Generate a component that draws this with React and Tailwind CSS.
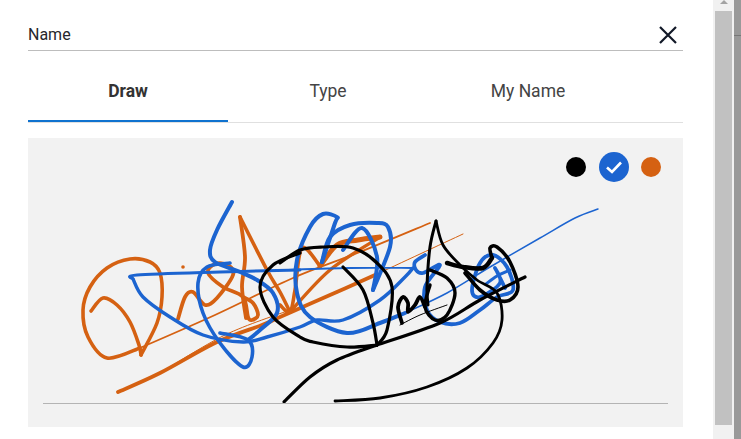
const BLUE = '#1c64d0';
const ORANGE = '#d56112';
const BLACK = '#000000';

// pen strokes in page coordinates: [colour, width, points]
const strokes = [
  // orange signature
  [ORANGE, 3.6, [[91, 311], [103, 298], [117, 305], [130, 322], [139, 345], [141, 355]]],
  [ORANGE, 3.6, [[141, 355], [157, 323], [162, 297], [160, 273], [150, 262], [130, 259], [107, 268], [90, 287], [83, 310], [88, 337], [107, 358], [140, 348]]],
  [ORANGE, 1.8, [[140, 348], [215, 315], [293, 278], [360, 252], [430, 223]]],
  [ORANGE, 3.8, [[178, 319], [185, 297], [193, 292], [205, 305], [217, 298], [233, 275], [228, 265], [215, 264], [208, 273], [223, 287], [243, 297], [248, 317], [252, 320], [258, 315], [253, 303], [243, 297]]],
  [ORANGE, 3.8, [[240, 217], [245, 257], [242, 287], [246, 318]]],
  [ORANGE, 3.6, [[240, 217], [267, 270], [280, 292], [290, 312]]],
  [ORANGE, 3.8, [[118, 392], [160, 373], [217, 342], [262, 325], [280, 317], [330, 295], [375, 275]]],
  [ORANGE, 1, [[375, 275], [420, 254], [463, 234]]],
  [ORANGE, 1, [[160, 373], [225, 335], [290, 310]]],
  [ORANGE, 3.4, [[290, 312], [330, 270], [380, 237]]],
  [ORANGE, 5, [[380, 237], [358, 240], [337, 245], [320, 266]]],
  [ORANGE, 3.6, [[320, 266], [302, 248], [295, 290], [290, 312], [280, 305]]],
  // blue signature
  [BLUE, 4, [[232, 202], [217, 230], [210, 250], [215, 262], [240, 272], [257, 280], [273, 293], [277, 313], [260, 330], [248, 340]]],
  [BLUE, 3.6, [[230, 263], [207, 267], [198, 283], [203, 313], [220, 343], [243, 367], [252, 357], [248, 340], [220, 333]]],
  [BLUE, 3, [[300, 270], [220, 272], [137, 275], [133, 279]]],
  [BLUE, 3.4, [[133, 279], [143, 297], [170, 317], [203, 335], [243, 342], [267, 337], [300, 327], [317, 320], [343, 320], [380, 300], [405, 277], [413, 268]]],
  [BLUE, 1.8, [[280, 270], [350, 268], [413, 268]]],
  [BLUE, 4, [[343, 250], [362, 228], [377, 257], [373, 290]]],
  [BLUE, 4, [[373, 290], [390, 247], [388, 227], [377, 223], [350, 225], [330, 237], [322, 262]]],
  [BLUE, 4, [[322, 262], [335, 223], [337, 217], [323, 214], [310, 227], [297, 260], [297, 293], [310, 317], [347, 333], [380, 323], [405, 313]]],
  [BLUE, 1.5, [[405, 313], [447, 293], [490, 267], [540, 238], [575, 218], [598, 209]]],
  [BLUE, 3.8, [[425, 255], [415, 262], [416, 270], [423, 273], [440, 265], [425, 287], [427, 310], [440, 322], [460, 323], [480, 310], [497, 297], [513, 290], [507, 267], [493, 255], [480, 263], [472, 290], [480, 297], [500, 283], [495, 268], [505, 288]]],
  [BLUE, 3, [[486, 284], [497, 276], [510, 270]]],
  // black signature
  [BLACK, 3.2, [[300, 253], [273, 265], [260, 287], [273, 317], [300, 337], [313, 342], [347, 347], [377, 345]]],
  [BLACK, 3.2, [[377, 345], [387, 330], [392, 287], [377, 263], [353, 248], [323, 247], [300, 250], [280, 263]]],
  [BLACK, 3.2, [[343, 267], [363, 290], [373, 323], [377, 345]]],
  [BLACK, 3.2, [[377, 345], [440, 323], [480, 300], [525, 277]]],
  [BLACK, 3.2, [[284, 402], [310, 377], [337, 360], [377, 345]]],
  [BLACK, 2.8, [[335, 401], [380, 398], [427, 387], [467, 368], [493, 343], [502, 320], [497, 293], [477, 280], [460, 265], [443, 245], [436, 221]]],
  [BLACK, 3, [[436, 221], [430, 247], [427, 287], [428, 305]]],
  [BLACK, 3.4, [[430, 270], [447, 278], [455, 293], [447, 315], [435, 320], [425, 307], [430, 285]]],
  [BLACK, 4.5, [[447, 263], [463, 267], [483, 268], [492, 258]]],
  [BLACK, 3.6, [[492, 258], [490, 248], [497, 247], [510, 262], [518, 287], [510, 300], [497, 300], [480, 290], [465, 273]]],
  [BLACK, 3.8, [[402, 323], [398, 307], [403, 297], [408, 303], [408, 312], [415, 305], [420, 297], [425, 307]]],
  [BLACK, 1, [[400, 325], [420, 315], [447, 305]]],
];

function toPath(points) {
  let d = `M${points[0][0]} ${points[0][1]}`;
  for (let i = 0; i < points.length - 1; i++) {
    const p0 = points[i - 1] ?? points[i];
    const p1 = points[i];
    const p2 = points[i + 1];
    const p3 = points[i + 2] ?? p2;
    const c1x = p1[0] + (p2[0] - p0[0]) / 6;
    const c1y = p1[1] + (p2[1] - p0[1]) / 6;
    const c2x = p2[0] - (p3[0] - p1[0]) / 6;
    const c2y = p2[1] - (p3[1] - p1[1]) / 6;
    d += ` C${c1x} ${c1y} ${c2x} ${c2y} ${p2[0]} ${p2[1]}`;
  }
  return d;
}

function Signature() {
  return (
    <svg className="absolute inset-0 w-full h-full" viewBox="28 138 655 289" fill="none" strokeLinecap="round" strokeLinejoin="round">
      {strokes.map(([color, width, points], i) => (
        <path key={i} d={toPath(points)} stroke={color} strokeWidth={width} />
      ))}
      <circle cx="183" cy="267" r="1.8" fill={ORANGE} />
    </svg>
  );
}

export default function App() {
  return (
    <div className="flex w-[741px] h-[439px] overflow-hidden bg-white font-['Roboto',sans-serif]">
      <div className="w-[713px] pl-[28px] pr-[30px]">
        {/* Name field */}
        <div className="flex items-center justify-between h-[51px] pt-[19px] border-b border-[#bdbdbd]">
          <span className="text-[16px] font-normal text-[#26262b]">Name</span>
          <svg className="mr-[6px]" width="18" height="18" viewBox="0 0 18 18" stroke="#111827" strokeWidth="2.2" fill="none">
            <path d="M1 1 L17 17 M17 1 L1 17" />
          </svg>
        </div>

        {/* Tabs */}
        <div className="flex h-[72px] border-b border-[#e0e0e0] text-[17.5px] text-[#444444]">
          <div className="w-[200px] h-[71px] pt-[11px] flex items-center justify-center border-b-2 border-[#0f72cf] font-bold text-[#333333]">Draw</div>
          <div className="w-[200px] pb-[1px] pt-[11px] flex items-center justify-center">Type</div>
          <div className="w-[200px] pb-[1px] pt-[11px] flex items-center justify-center">My Name</div>
        </div>

        {/* Draw panel */}
        <div className="relative flex flex-col h-[289px] mt-[15px] bg-[#f2f2f2]">
          <Signature />
          <div className="relative flex items-center justify-end pt-[14px] pr-[22px]">
            <div className="w-5 h-5 rounded-full bg-black" />
            <div className="flex items-center justify-center w-[30px] h-[30px] ml-[13px] mr-[12px] rounded-full bg-[#1c64d0]">
              <svg width="16" height="13" viewBox="0 0 16 13" fill="none" stroke="white" strokeWidth="2.6">
                <path d="M1 6.5 L6 11 L15 1.5" />
              </svg>
            </div>
            <div className="w-5 h-5 rounded-full bg-[#d56112]" />
          </div>
          <div className="relative mt-auto mx-[15px] mb-[23px] border-t border-[#b4b4b4]" />
        </div>
      </div>

      {/* Scrollbar */}
      <div className="flex flex-col items-center w-[21px] bg-[#f1f1f1]">
        <div className="h-[11px] flex items-start justify-center">
          <div className="w-0 h-0 border-x-[4px] border-x-transparent border-b-[4px] border-b-[#a3a3a3]" />
        </div>
        <div className="w-[17px] h-[414px] bg-[#c1c1c1]" />
      </div>
      <div className="flex-1 bg-[#999999]">
        <div className="h-[1px] mt-[35px] bg-[#777777]" />
      </div>
    </div>
  );
}
